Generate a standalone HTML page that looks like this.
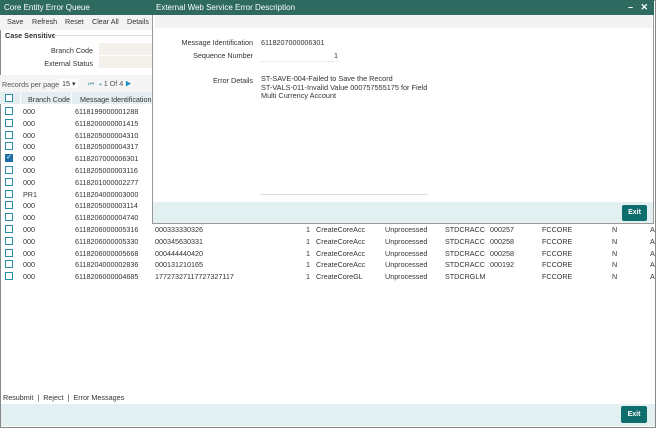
<!DOCTYPE html>
<html><head><style>
*{margin:0;padding:0;box-sizing:border-box}
body{width:656px;height:428px;overflow:hidden;background:#fff;font-family:"Liberation Sans",sans-serif;font-size:7.2px;color:#333;position:relative}
.a{position:absolute;white-space:nowrap}
.r{position:absolute;white-space:nowrap;text-align:right}
.bar{position:absolute;background:#2e6a60;color:#fff;font-size:8px;height:15px;line-height:15px}
.cb{position:absolute;width:8px;height:8px;border:1.3px solid #2a8fa5;background:#fff}
.btn{position:absolute;background:#0e6e6e;color:#fff;font-weight:bold;font-size:7px;text-align:center;border-radius:2px}
</style></head><body>
<div style="position:absolute;left:0;top:0;width:656px;height:428px;border:1px solid #888"></div>
<div class="bar" style="left:0;top:0;width:152px;padding-left:4px">Core Entity Error Queue</div>
<div style="position:absolute;left:0;top:15px;width:152px;height:15px;background:#f3f3f3"></div>
<div class="a" style="left:7px;top:17px">Save</div>
<div class="a" style="left:32px;top:17px">Refresh</div>
<div class="a" style="left:65px;top:17px">Reset</div>
<div class="a" style="left:92px;top:17px">Clear All</div>
<div class="a" style="left:127px;top:17px">Details</div>
<div class="a" style="left:5px;top:31px;font-weight:bold">Case Sensitive</div>
<div style="position:absolute;left:54px;top:35px;width:98px;border-top:1px solid #ddd"></div>
<div class="r" style="right:563px;top:46px">Branch Code</div>
<div style="position:absolute;left:99px;top:43px;width:53px;height:12px;background:#f4f1ec"></div>
<div class="r" style="right:563px;top:59px">External Status</div>
<div style="position:absolute;left:99px;top:56px;width:53px;height:12px;background:#f4f1ec"></div>
<div style="position:absolute;left:0;top:75px;width:152px;height:17px;background:#f5f5f5"></div>
<div class="a" style="left:2px;top:80px;color:#555">Records per page</div>
<div class="a" style="left:60px;top:79px;background:#fff;padding:0 2px">15 ▾</div>
<div class="a" style="left:88px;top:79px;color:#7ab">⏮ &nbsp;◂ <span style="color:#555">1 Of 4</span> <span style="color:#1a8fc4">▶</span></div>
<div style="position:absolute;left:0;top:92px;width:152px;height:12px;background:#e4eef0"></div>
<div class="cb" style="left:5px;top:94px"></div>
<div class="a" style="left:28px;top:95px">Branch Code</div>
<div class="a" style="left:80px;top:95px">Message Identification</div>
<div style="position:absolute;left:20px;top:92px;height:12px;border-left:1px solid #fff"></div>
<div style="position:absolute;left:71px;top:92px;height:12px;border-left:1px solid #fff"></div>
<div id="rows"></div>
<div class="a" style="left:3px;top:393px">Resubmit &nbsp;| &nbsp;Reject &nbsp;| &nbsp;Error Messages</div>
<div style="position:absolute;left:1px;top:404px;width:654px;height:22px;background:#e2f0f2"></div>
<div class="btn" style="left:621px;top:406px;width:26px;height:17px;line-height:17px">Exit</div>

<div style="position:absolute;left:152px;top:0;width:502px;height:224px;background:#fff;border:1px solid #999;border-top:none"></div>
<div class="bar" style="left:152px;top:0;width:502px;padding-left:4px">External Web Service Error Description<span style="position:absolute;right:6px;font-weight:bold;font-size:9px">–&nbsp;&nbsp; ✕</span></div>
<div style="position:absolute;left:155px;top:15px;width:497px;height:13px;background:#f3f3f3"></div>
<div class="r" style="right:403px;top:38px">Message Identification</div>
<div class="a" style="left:261px;top:38px">6118207000006301</div>
<div class="r" style="right:403px;top:51px">Sequence Number</div>
<div class="a" style="left:334px;top:51px">1</div>
<div style="position:absolute;left:260px;top:61px;width:80px;border-top:1px solid #eee"></div>
<div class="r" style="right:403px;top:76px">Error Details</div>
<div class="a" style="left:261px;top:75px;line-height:8.5px;font-size:7.3px">ST-SAVE-004-Failed to Save the Record<br>ST-VALS-011-Invalid Value 000757555175 for Field<br>Multi Currency Account</div>
<div style="position:absolute;left:260px;top:194px;width:168px;border-top:1px solid #ddd"></div>
<div style="position:absolute;left:153px;top:202px;width:500px;height:21px;background:#e2f0f2"></div>
<div class="btn" style="left:622px;top:205px;width:25px;height:16px;line-height:16px">Exit</div>
<script>
var d=[["000","6118199000001288"],["000","6118200000001415"],["000","6118205000004310"],["000","6118205000004317"],["000","6118207000006301",1],["000","6118205000003116"],["000","6118201000002277"],["PR1","6118204000003000"],["000","6118205000003114"],["000","6118206000004740"],
["000","6118206000005316","000333330326","CreateCoreAcc","000257"],["000","6118206000005330","000345630331","CreateCoreAcc","000258"],["000","6118206000005668","000444440420","CreateCoreAcc","000258"],["000","6118204000002836","000131210165","CreateCoreAcc","000192"],["000","6118206000004685","17727327117727327117","CreateCoreGL",""]];
var h="";d.forEach(function(r,i){var y=107+i*11.8;
h+='<div class="cb" style="left:5px;top:'+(y)+'px">'+(r[2]===1?'<div style="position:absolute;left:-1px;top:-1px;width:8px;height:8px;background:#1e6fa6;color:#fff;font-size:7px;line-height:8px;text-align:center">✓</div>':'')+'</div>';
h+='<div class="a" style="left:23px;top:'+y+'px">'+r[0]+'</div><div class="a" style="left:75px;top:'+y+'px">'+r[1]+'</div>';
if(r.length>3){h+='<div class="a" style="left:155px;top:'+y+'px">'+r[2]+'</div><div class="a" style="left:306px;top:'+y+'px">1</div><div class="a" style="left:316px;top:'+y+'px">'+r[3]+'</div><div class="a" style="left:385px;top:'+y+'px">Unprocessed</div><div class="a" style="left:445px;top:'+y+'px">'+(r[3]=="CreateCoreGL"?"STDCRGLM":"STDCRACC")+'</div><div class="a" style="left:490px;top:'+y+'px">'+r[4]+'</div><div class="a" style="left:542px;top:'+y+'px">FCCORE</div><div class="a" style="left:612px;top:'+y+'px">N</div><div class="a" style="left:650px;top:'+y+'px">A</div>';}
});document.getElementById("rows").innerHTML=h;
</script>
</body></html>
